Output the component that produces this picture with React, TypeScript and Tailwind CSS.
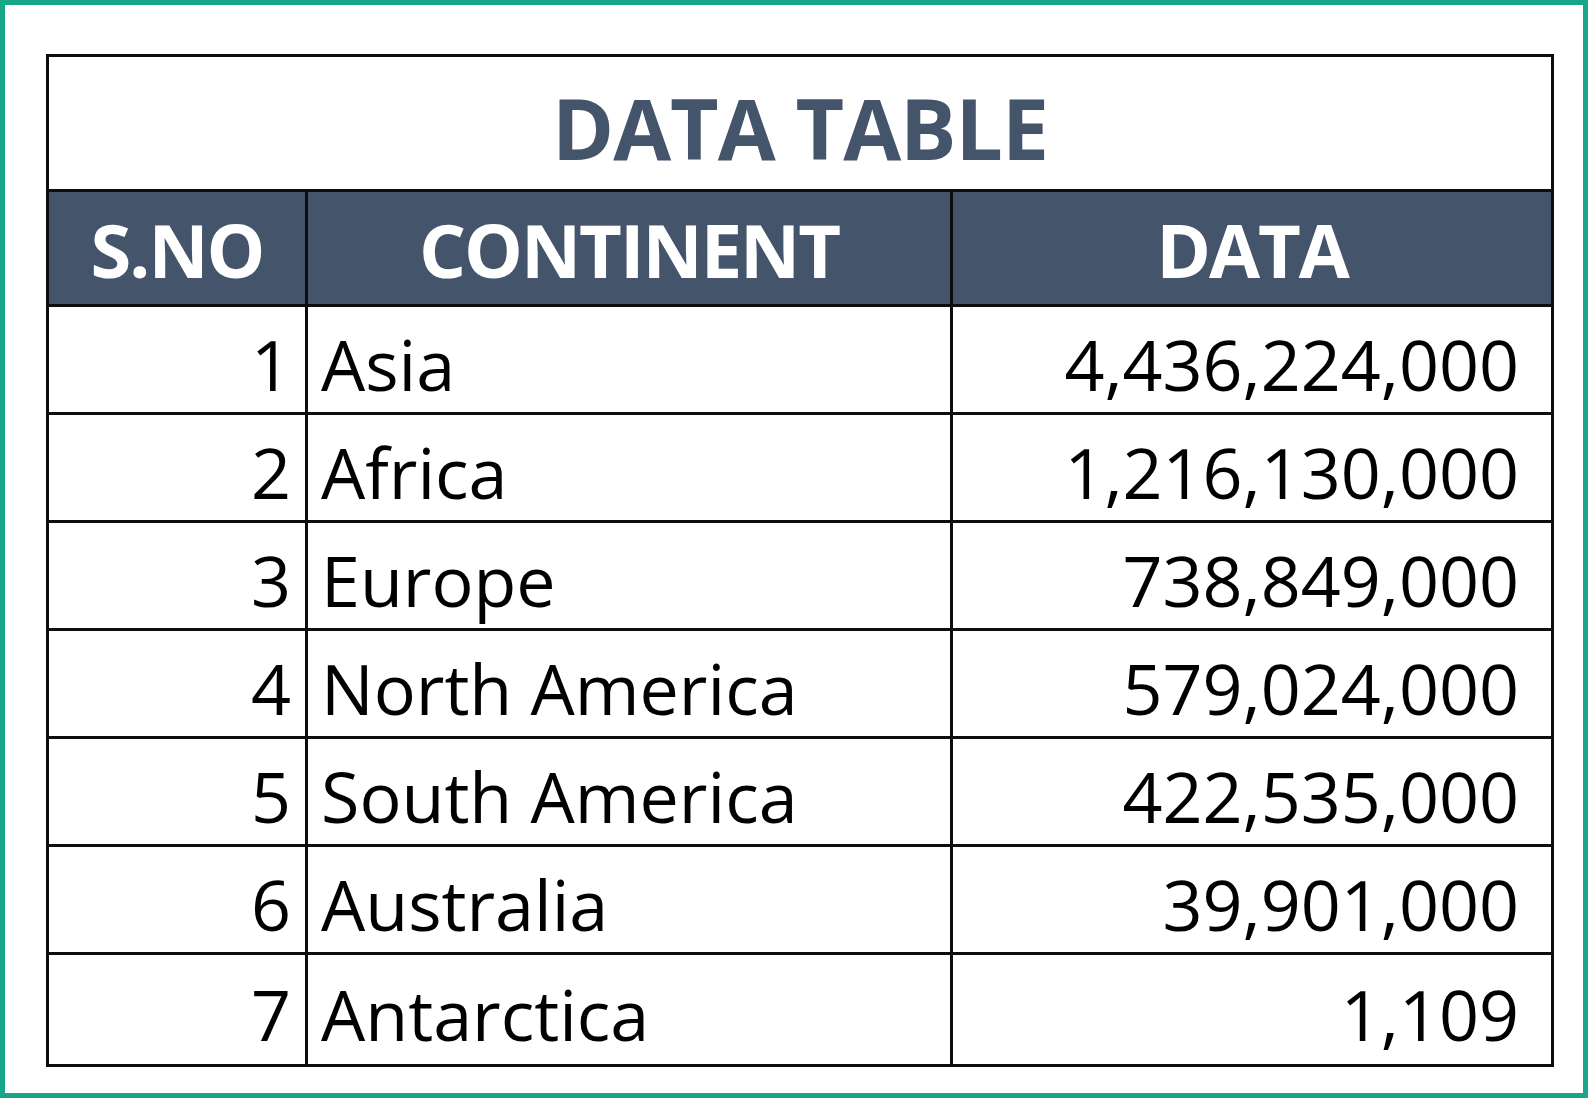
const rows = [
  { no: 1, name: "Asia", value: "4,436,224,000" },
  { no: 2, name: "Africa", value: "1,216,130,000" },
  { no: 3, name: "Europe", value: "738,849,000" },
  { no: 4, name: "North America", value: "579,024,000" },
  { no: 5, name: "South America", value: "422,535,000" },
  { no: 6, name: "Australia", value: "39,901,000" },
  { no: 7, name: "Antarctica", value: "1,109" },
];

export default function App() {
  return (
    <div
      className="w-[1588px] h-[1098px] bg-white border-[5px] border-[#17a68a] pl-[41px] pt-[49px]"
      style={{ fontFamily: '"Open Sans", "Noto Sans", sans-serif' }}
    >
      <div className="w-[1508px] border-[3px] border-[#0d0d0d]">
        <div className="h-[132px] flex items-center justify-center text-[#44546a] font-bold text-[84px] tracking-[-1px] leading-none pt-[10px]">
          DATA TABLE
        </div>
        <div className="grid grid-cols-[256px_3px_642px_3px_1fr] h-[115px] border-t-[3px] border-[#0d0d0d] bg-[#44546a] text-white font-bold text-[74px] tracking-[-2px] leading-none">
          <div className="flex items-center justify-center pt-[4px]">S.NO</div>
          <div className="bg-[#0d0d0d]" />
          <div className="flex items-center justify-center pt-[4px]">CONTINENT</div>
          <div className="bg-[#0d0d0d]" />
          <div className="flex items-center justify-center pt-[4px]">DATA</div>
        </div>
        {rows.map((r) => (
          <div
            key={r.no}
            className="grid grid-cols-[256px_3px_642px_3px_1fr] h-[108px] last:h-[112px] border-t-[3px] border-[#0d0d0d] text-[70px] text-black leading-none"
          >
            <div className="flex items-center justify-end pr-[14px] pt-[8px]">{r.no}</div>
            <div className="bg-[#0d0d0d]" />
            <div className="flex items-center pl-[13px] pt-[8px]">{r.name}</div>
            <div className="bg-[#0d0d0d]" />
            <div className="flex items-center justify-end pr-[32px] pt-[8px]">{r.value}</div>
          </div>
        ))}
      </div>
    </div>
  );
}
